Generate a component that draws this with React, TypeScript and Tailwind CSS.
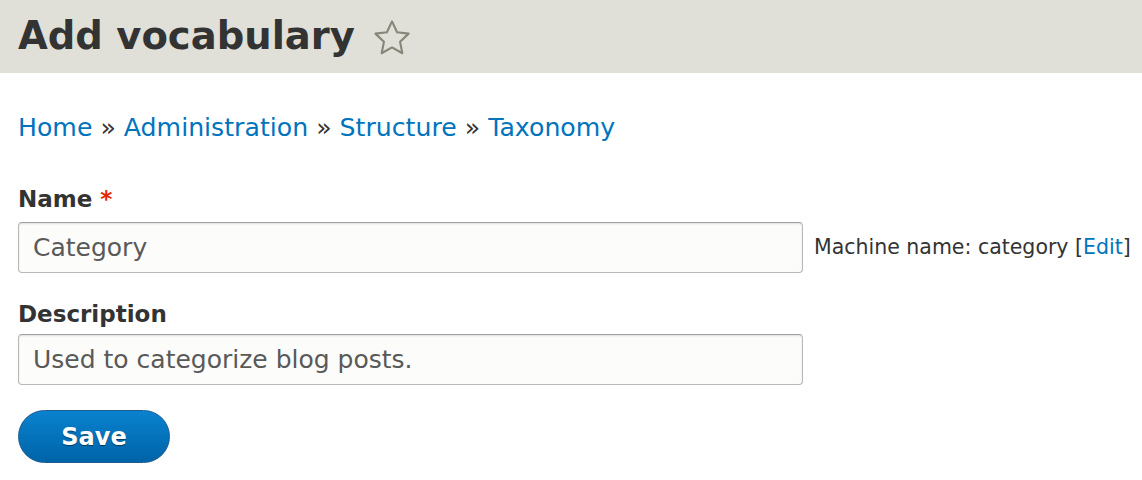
const font = { fontFamily: '"DejaVu Sans", Verdana, sans-serif' };

const App = (): JSX.Element => {
  return (
    <div className="w-[1142px] h-[480px] bg-white text-[#333] overflow-hidden" style={font}>
      <div className="h-[73px] bg-[#e0e0d8] flex items-center px-[18px]">
        <h1 className="text-[38.5px] font-bold text-[#333] leading-none">
          Add vocabulary
        </h1>
        <svg
          width="42"
          height="42"
          viewBox="0 0 24 24"
          className="ml-[16px] mt-[2px]"
          fill="none"
          stroke="#868679"
          strokeWidth="1.2"
          strokeLinejoin="round"
        >
          <path d="M12 2.5l2.9 6.2 6.6.8-4.9 4.6 1.3 6.6L12 17.4l-5.9 3.3 1.3-6.6-4.9-4.6 6.6-.8z" />
        </svg>
      </div>

      <div className="pl-[18px]">
        <nav className="pt-[42px] text-[25.2px] leading-none text-[#0074bd]">
          <a href="#">Home</a>
          <span className="text-[#333]"> » </span>
          <a href="#">Administration</a>
          <span className="text-[#333]"> » </span>
          <a href="#">Structure</a>
          <span className="text-[#333]"> » </span>
          <a href="#">Taxonomy</a>
        </nav>

        <div className="mt-[48px]">
          <label className="block text-[23px] font-bold leading-none">
            Name <span className="text-[#e62600]">*</span>
          </label>
          <div className="flex items-center mt-[11px]">
            <div className="shrink-0 w-[785px] h-[51px] border border-[#b8b8b8] border-t-[#a0a0a0] rounded-[4px] bg-[#fcfcfa] flex items-center px-[14px] text-[25px] text-[#595959] shadow-[inset_0_1px_2px_rgba(0,0,0,0.12)]">
              Category
            </div>
            <span className="ml-[11px] whitespace-nowrap text-[20.5px] text-[#333]">
              Machine name: category [<a href="#" className="text-[#0074bd]">Edit</a>]
            </span>
          </div>
        </div>

        <div className="mt-[30px]">
          <label className="block text-[23px] font-bold leading-none">Description</label>
          <div className="w-[785px] h-[51px] mt-[8px] border border-[#b8b8b8] border-t-[#a0a0a0] rounded-[4px] bg-[#fcfcfa] flex items-center px-[14px] text-[25px] text-[#595959] shadow-[inset_0_1px_2px_rgba(0,0,0,0.12)]">
            Used to categorize blog posts.
          </div>
        </div>

        <button className="mt-[25px] w-[152px] h-[53px] rounded-full border border-[#1e5c90] bg-gradient-to-b from-[#0a82cf] to-[#0064a8] text-white text-[24px] font-bold [text-shadow:0_1px_1px_rgba(0,0,0,0.5)]">
          Save
        </button>
      </div>
    </div>
  );
};

export default App;
